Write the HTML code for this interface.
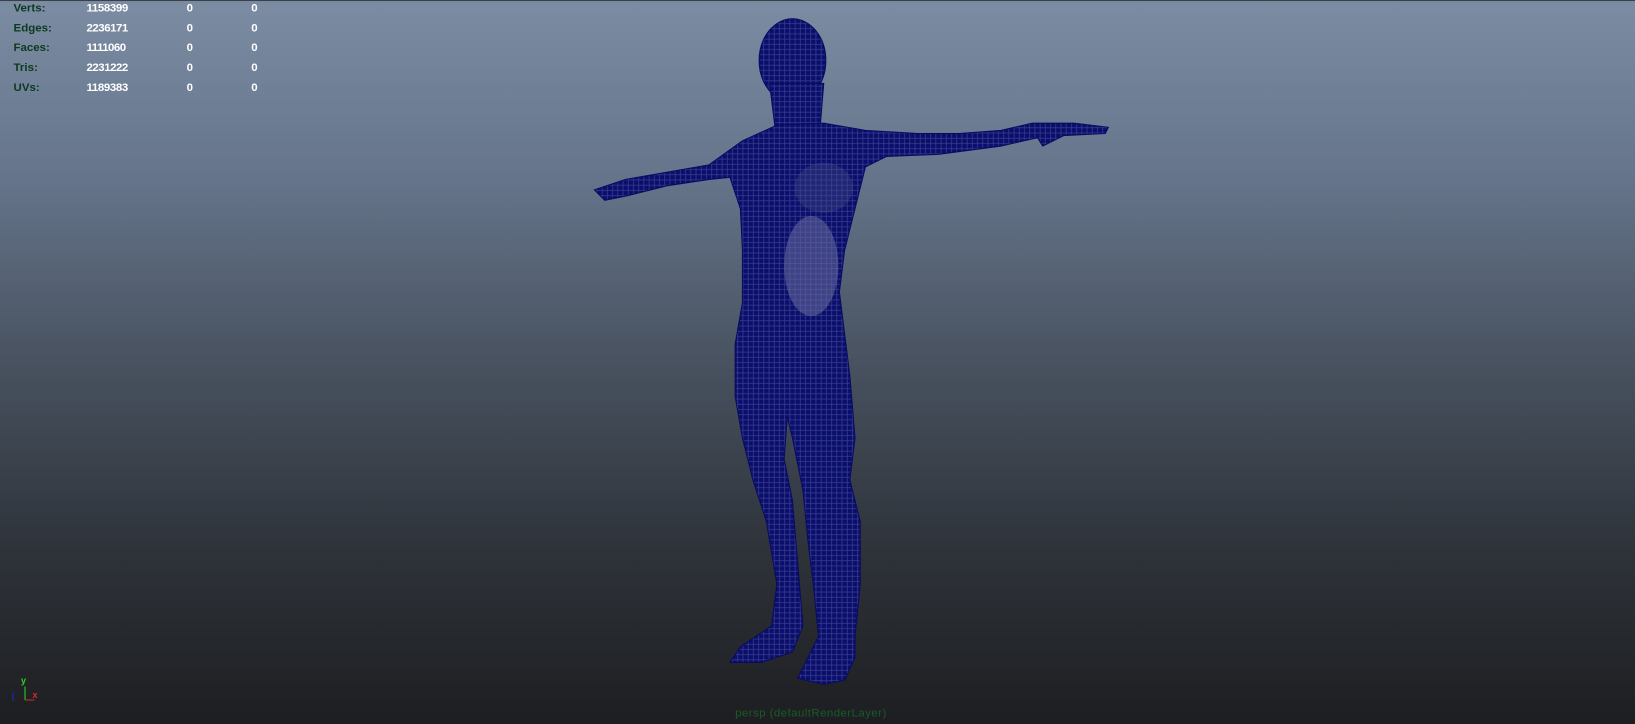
<!DOCTYPE html>
<html><head><meta charset="utf-8"><style>
html,body{margin:0;padding:0;width:1635px;height:724px;overflow:hidden;background:#1e1f22}
svg{display:block}
</style></head><body>
<svg width="1635" height="724" viewBox="0 0 1568 694" preserveAspectRatio="none">
<defs>
<linearGradient id="bg" x1="0" y1="0" x2="0" y2="1">
<stop offset="0" stop-color="#7b8ca3"/>
<stop offset="0.25" stop-color="#65748a"/>
<stop offset="0.5" stop-color="#485260"/>
<stop offset="0.75" stop-color="#2f343b"/>
<stop offset="1" stop-color="#1d1e21"/>
</linearGradient>
<pattern id="wire" width="5" height="5" patternUnits="userSpaceOnUse">
<rect width="5" height="5" fill="#0b0f6c"/>
<path d="M0 2.5H5M2.5 0V5" stroke="#3a3f8e" stroke-width="0.7"/>
</pattern>
</defs>
<rect width="1568" height="694" fill="url(#bg)"/>
<rect width="1568" height="1" fill="#3a3f48"/>
<g fill="url(#wire)" stroke="#080b60" stroke-width="1">
<ellipse cx="760" cy="58" rx="32" ry="40"/>
<polygon points="738,80 790,80 786,128 744,128"/>
<polygon points="570,182 600,172 640,165 680,158 712,135 745,120 790,118 830,125 880,128 920,128 960,125 990,118 1030,118 1063,122 1060,128 1020,130 1000,140 995,132 960,140 900,148 850,150 830,160 820,200 810,240 805,280 810,320 815,360 820,420 815,460 825,500 825,560 820,610 820,630 810,652 790,656 765,650 775,630 785,610 780,560 775,520 770,470 760,420 755,400 752,440 760,480 765,540 770,600 760,625 730,635 700,635 710,620 740,600 745,560 735,500 722,460 712,420 705,380 705,330 712,290 712,240 710,200 700,170 680,172 640,178 600,188 580,192"/>
</g>
<ellipse cx="778" cy="255" rx="26" ry="48" fill="#6a6e9c" opacity="0.55"/>
<ellipse cx="790" cy="180" rx="28" ry="24" fill="#4a4f88" opacity="0.35"/>
<g font-family="Liberation Sans, Arial, sans-serif" font-size="11" font-weight="bold">
<g fill="#0c3a1e">
<text x="13" y="11">Verts:</text><text x="13" y="30">Edges:</text><text x="13" y="49">Faces:</text><text x="13" y="68">Tris:</text><text x="13" y="87">UVs:</text>
</g>
<g fill="#ffffff">
<text x="83" y="11" textLength="40">1158399</text><text x="83" y="30" textLength="40">2236171</text><text x="83" y="49" textLength="38">1111060</text><text x="83" y="68" textLength="40">2231222</text><text x="83" y="87" textLength="40">1189383</text>
<text x="179" y="11">0</text><text x="179" y="30">0</text><text x="179" y="49">0</text><text x="179" y="68">0</text><text x="179" y="87">0</text>
<text x="241" y="11">0</text><text x="241" y="30">0</text><text x="241" y="49">0</text><text x="241" y="68">0</text><text x="241" y="87">0</text>
</g>
</g>
<text x="705" y="687" font-family="Liberation Sans, Arial, sans-serif" font-size="11" fill="#1a5a26" textLength="145">persp (defaultRenderLayer)</text>
<g font-family="Liberation Sans, Arial, sans-serif" font-size="9" font-weight="bold">
<line x1="24" y1="658" x2="24" y2="671" stroke="#2bd22b"/>
<line x1="24" y1="671" x2="33" y2="671" stroke="#d22b2b"/>
<text x="20" y="655" fill="#2bd22b">y</text>
<text x="31" y="669" fill="#d22b2b">x</text>
<text x="11" y="670" fill="#1a2aa8">(</text>
</g>
</svg>
</body></html>
